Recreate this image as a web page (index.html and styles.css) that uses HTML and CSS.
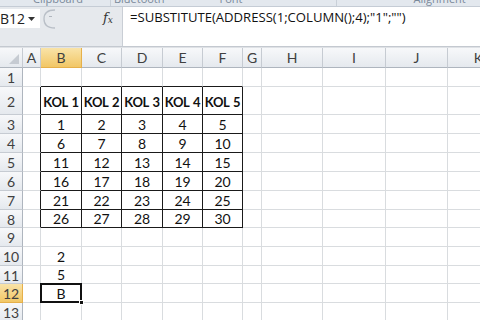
FILE: index.html
```html
<!DOCTYPE html>
<html>
<head>
<meta charset="utf-8">
<link rel="stylesheet" href="styles.css">
</head>
<body>
<div class="app">
  <div class="ribbon">
    <span class="lbl l1">Clipboard</span>
    <span class="sep"></span>
    <span class="lbl l2">Bluetooth</span>
    <span class="lbl l3">Font</span>
    <span class="sep s2"></span>
    <span class="lbl l4">Alignment</span>
  </div>
  <div class="fbar">
    <div class="namearea">
      <div class="namebox">
        <span class="nbtext">B12</span>
        <svg class="arrow" width="8" height="5" viewBox="0 0 8 5"><path d="M0 0H7L3.5 4Z" fill="#333"/></svg>
      </div>
      <svg class="handle" width="14" height="20" viewBox="0 0 14 20"><path d="M13 1C5 1 2 5 2 10S5 19 13 19" fill="none" stroke="#b9bfc7" stroke-width="1.3"/><path d="M7 7.5H10" stroke="#b0b6be" stroke-width="1"/></svg>
      <span class="fx">f<sub>x</sub></span>
    </div>
    <div class="formula">=SUBSTITUTE(ADDRESS(1;COLUMN();4);"1";"")</div>
  </div>
  <div class="sheet">
    <!-- header row -->
    <div class="h corner"><svg width="12" height="12" viewBox="0 0 12 12"><path d="M11 1V11H1Z" fill="#c6cbd2"/></svg></div>
    <div class="h">A</div><div class="h sel">B</div><div class="h">C</div><div class="h">D</div><div class="h">E</div><div class="h">F</div><div class="h">G</div><div class="h">H</div><div class="h">I</div><div class="h">J</div><div class="h">K</div>
    <!-- row 1 -->
    <div class="r">1</div><div class="c"></div><div class="c tt"></div><div class="c tt"></div><div class="c tt"></div><div class="c tt"></div><div class="c tt"></div><div class="c"></div><div class="c"></div><div class="c"></div><div class="c"></div><div class="c"></div>
    <!-- row 2 -->
    <div class="r">2</div><div class="c tl"></div><div class="c t b">KOL 1</div><div class="c t b">KOL 2</div><div class="c t b">KOL 3</div><div class="c t b">KOL 4</div><div class="c t b">KOL 5</div><div class="c"></div><div class="c"></div><div class="c"></div><div class="c"></div><div class="c"></div>
    <!-- row 3 -->
    <div class="r">3</div><div class="c tl"></div><div class="c t">1</div><div class="c t">2</div><div class="c t">3</div><div class="c t">4</div><div class="c t">5</div><div class="c"></div><div class="c"></div><div class="c"></div><div class="c"></div><div class="c"></div>
    <!-- row 4 -->
    <div class="r">4</div><div class="c tl"></div><div class="c t">6</div><div class="c t">7</div><div class="c t">8</div><div class="c t">9</div><div class="c t">10</div><div class="c"></div><div class="c"></div><div class="c"></div><div class="c"></div><div class="c"></div>
    <!-- row 5 -->
    <div class="r">5</div><div class="c tl"></div><div class="c t">11</div><div class="c t">12</div><div class="c t">13</div><div class="c t">14</div><div class="c t">15</div><div class="c"></div><div class="c"></div><div class="c"></div><div class="c"></div><div class="c"></div>
    <!-- row 6 -->
    <div class="r">6</div><div class="c tl"></div><div class="c t">16</div><div class="c t">17</div><div class="c t">18</div><div class="c t">19</div><div class="c t">20</div><div class="c"></div><div class="c"></div><div class="c"></div><div class="c"></div><div class="c"></div>
    <!-- row 7 -->
    <div class="r">7</div><div class="c tl"></div><div class="c t">21</div><div class="c t">22</div><div class="c t">23</div><div class="c t">24</div><div class="c t">25</div><div class="c"></div><div class="c"></div><div class="c"></div><div class="c"></div><div class="c"></div>
    <!-- row 8 -->
    <div class="r">8</div><div class="c tl"></div><div class="c t">26</div><div class="c t">27</div><div class="c t">28</div><div class="c t">29</div><div class="c t">30</div><div class="c"></div><div class="c"></div><div class="c"></div><div class="c"></div><div class="c"></div>
    <!-- row 9 -->
    <div class="r">9</div><div class="c"></div><div class="c"></div><div class="c"></div><div class="c"></div><div class="c"></div><div class="c"></div><div class="c"></div><div class="c"></div><div class="c"></div><div class="c"></div><div class="c"></div>
    <!-- row 10 -->
    <div class="r">10</div><div class="c"></div><div class="c">2</div><div class="c"></div><div class="c"></div><div class="c"></div><div class="c"></div><div class="c"></div><div class="c"></div><div class="c"></div><div class="c"></div><div class="c"></div>
    <!-- row 11 -->
    <div class="r">11</div><div class="c"></div><div class="c">5</div><div class="c"></div><div class="c"></div><div class="c"></div><div class="c"></div><div class="c"></div><div class="c"></div><div class="c"></div><div class="c"></div><div class="c"></div>
    <!-- row 12 -->
    <div class="r sel">12</div><div class="c"></div><div class="c active">B<span class="fill"></span></div><div class="c"></div><div class="c"></div><div class="c"></div><div class="c"></div><div class="c"></div><div class="c"></div><div class="c"></div><div class="c"></div><div class="c"></div>
    <!-- row 13 -->
    <div class="r">13</div><div class="c"></div><div class="c"></div><div class="c"></div><div class="c"></div><div class="c"></div><div class="c"></div><div class="c"></div><div class="c"></div><div class="c"></div><div class="c"></div><div class="c"></div>
  </div>
</div>
</body>
</html>
```

FILE: styles.css
```css
* { box-sizing: border-box; }
html, body { margin: 0; padding: 0; background: #fff; }
body { width: 480px; height: 320px; overflow: hidden; font-family: Lato, "Liberation Sans", sans-serif; }

.app { width: 480px; height: 320px; overflow: hidden; display: flex; flex-direction: column; }

.ribbon {
  height: 7px;
  flex: none;
  display: flex;
  background: #e3e8ee;
  border-bottom: 1px solid #c5ccd5;
  overflow: hidden;
  font-family: "Open Sans", sans-serif;
  font-size: 11px;
  color: #7a889a;
  line-height: 12px;
}
.lbl { margin-top: -7px; white-space: nowrap; }
.l1 { margin-left: 33px; }
.sep { width: 1px; background: #c9d0d8; margin-left: 27px; }
.l2 { margin-left: 3px; }
.l3 { margin-left: 55px; }
.s2 { margin-left: 93px; }
.l4 { margin-left: 77px; }

.fbar {
  height: 40px;
  flex: none;
  display: flex;
  background: #e6e9ed;
  border-bottom: 1px solid #c4c9d0;
}
.namearea {
  width: 122px;
  flex: none;
  display: flex;
  align-items: flex-start;
  padding-top: 2px;
}
.namebox {
  width: 40px;
  height: 19px;
  background: #fff;
  display: flex;
  align-items: center;
  justify-content: space-between;
  padding: 0 4px 0 0;
  font-family: "Open Sans", sans-serif;
  font-size: 14px;
  color: #222;
}
.arrow { margin-top: 1px; }
.handle { margin-left: 2px; }
.fx {
  margin-left: 47px;
  margin-top: 1px;
  font-family: "DejaVu Serif", "Liberation Serif", serif;
  font-style: italic;
  font-size: 13px;
  color: #333;
  line-height: 16px;
}
.fx sub { font-size: 9px; vertical-align: -1px; }
.formula {
  flex: 1;
  background: #fff;
  border-left: 1px solid #c9ced5;
  padding: 1px 0 0 7px;
  font-family: "Open Sans", sans-serif;
  font-size: 13.1px;
  color: #111;
  white-space: nowrap;
  line-height: 18px;
}

.sheet {
  flex: none;
  display: grid;
  grid-template-columns: 23px 18px 41px 40px 41px 40px 40px 19px 61px 63px 62px 62px;
  grid-template-rows: 20px 19px 28px 19px 19px 19px 19px 19px 18px 19px 19px 18px 19px 19px;
  border-top: 1px solid #dfe2e6;
}
.h, .r {
  background: linear-gradient(#f7f8fa, #e5e9ee);
  border-right: 1px solid #c6cbd2;
  border-bottom: 1px solid #c6cbd2;
  color: #404040;
  font-size: 14px;
  display: flex;
  align-items: center;
  justify-content: center;
}
.h { border-bottom-color: #aeb5be; }
.r { border-right-color: #aeb5be; padding-top: 1px; }
.corner { justify-content: flex-end; align-items: flex-end; padding: 0 2px 2px 0; }
.corner svg { display: block; }
.h.sel, .r.sel {
  background: linear-gradient(#f9e3a8, #f2c766);
  border-color: #e6b04a;
}
.c {
  border-right: 1px solid #d9dcdf;
  border-bottom: 1px solid #d9dcdf;
  font-size: 14px;
  color: #111;
  display: flex;
  align-items: flex-end;
  justify-content: center;
  line-height: 17px;
  padding-bottom: 0;
}
.c.t { border-right: 1px solid #1a1a1a; border-bottom: 1px solid #1a1a1a; }
.c.tt { border-bottom: 1px solid #1a1a1a; }
.c.tl { border-right: 1px solid #1a1a1a; }
.c.b { font-weight: 700; font-size: 13px; letter-spacing: -0.3px; word-spacing: 1px; padding-bottom: 3px; white-space: nowrap; }
.active { position: relative; }
.active::after {
  content: "";
  position: absolute;
  left: -1px; top: -1px; right: -1px; bottom: -1px;
  border: 2px solid #111;
}
.fill {
  position: absolute;
  right: -3px; bottom: -3px;
  width: 5px; height: 5px;
  background: #111;
  border: 1px solid #fff;
  z-index: 2;
}
```
